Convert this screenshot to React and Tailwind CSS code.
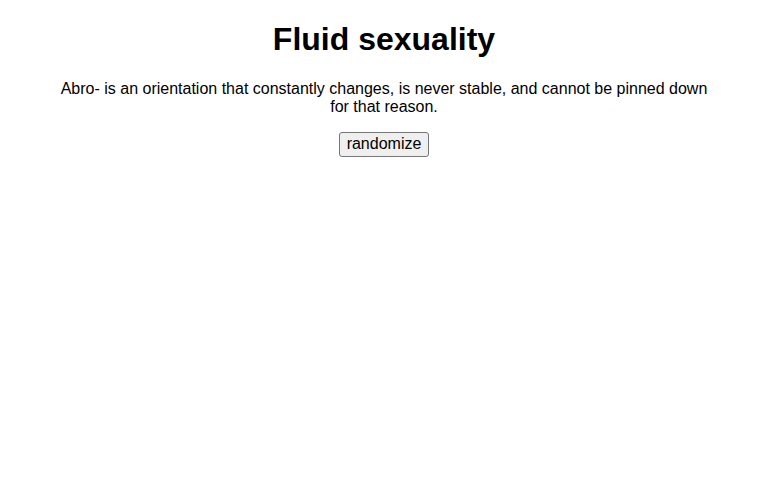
export default function App() {
  return (
    <div className="min-h-screen bg-white text-black font-['Liberation_Sans',Arial,sans-serif]">
      <div className="max-w-[660px] mx-auto text-center">
        <h1 className="text-[32px] leading-[36.8px] font-bold pt-[21.44px] mb-[21.44px]">Fluid sexuality</h1>
        <p className="text-[16px] leading-[18.4px] mb-4">
          Abro- is an orientation that constantly changes, is never stable, and cannot be pinned down for that reason.
        </p>
        <button className="text-[16px] leading-[18.4px] px-[7px] py-[2px] bg-[#efefef] border border-[#767676] rounded-[3px] text-black">
          randomize
        </button>
      </div>
    </div>
  );
}
